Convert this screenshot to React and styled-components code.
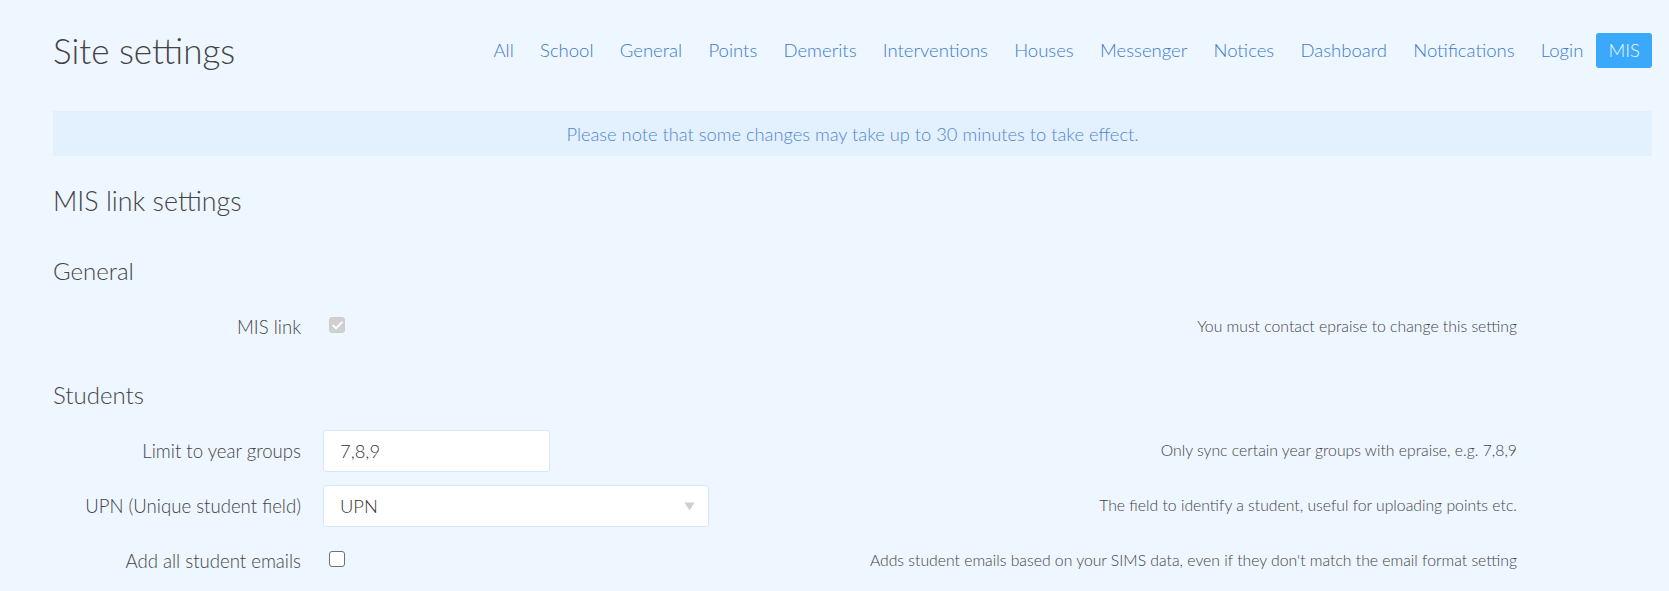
import React from "react";
import styled, { createGlobalStyle } from "styled-components";

const GlobalStyle = createGlobalStyle`
  html, body {
    margin: 0;
    padding: 0;
    background: #eef6ff;
  }
  body {
    font-family: Lato, "Open Sans", sans-serif;
    color: #444;
  }
  * { box-sizing: border-box; }
`;

const Page = styled.div`
  min-height: 591px;
  padding: 28px 17px 0 53px;
  background: #eef6ff;
`;

const Header = styled.header`
  display: flex;
  align-items: center;
  justify-content: space-between;
  min-height: 44px;
`;

const Title = styled.h1`
  margin: 0;
  font-size: 35px;
  line-height: 44px;
  font-weight: 300;
  color: #444;
`;

const Nav = styled.nav`
  display: flex;
  align-items: center;
`;

const NavLink = styled.a`
  display: block;
  padding: 7px ${(p) => (p.$active ? "12px" : "13.15px")};
  font-size: 18.5px;
  line-height: 21px;
  font-weight: 300;
  border-radius: 3px;
  text-decoration: none;
  cursor: pointer;
  color: ${(p) => (p.$active ? "#eef7ff" : "#3b7bcb")};
  background: ${(p) => (p.$active ? "#3aa9fb" : "transparent")};
`;

const Alert = styled.div`
  margin-top: 39px;
  padding: 12px 15px 11px;
  background: #e3f0fd;
  color: #4f86d2;
  font-size: 18.3px;
  line-height: 22px;
  font-weight: 300;
  text-align: center;
`;

const SectionTitle = styled.h2`
  margin: 30px 0 0;
  font-size: 26.8px;
  line-height: 31px;
  font-weight: 300;
  color: #444;
`;

const GroupTitle = styled.h3`
  margin: ${(p) => (p.$first ? "40px" : "33px")} 0 20px;
  font-size: 24px;
  line-height: 1.2;
  font-weight: 300;
  color: #444;
`;

const Rows = styled.div`
  display: flex;
  flex-direction: column;
  gap: 13px;
`;

const Row = styled.div`
  display: flex;
  align-items: center;
  min-height: 42px;
`;

const Label = styled.label`
  width: 248px;
  flex: none;
  text-align: right;
  font-size: 18.6px;
  line-height: 22px;
  font-weight: 300;
  color: #444;
`;

const Control = styled.div`
  margin-left: 22px;
  display: flex;
  align-items: center;
`;

const Description = styled.div`
  margin-left: auto;
  padding-right: 135px;
  font-size: 15.75px;
  line-height: 1.2;
  font-weight: 300;
  color: #444;
  text-align: right;
`;

const TextInput = styled.input`
  width: ${(p) => p.$width}px;
  height: 42px;
  padding: 0 16px;
  background: #fff;
  border: 1px solid #d9e8f8;
  border-radius: 3px;
  font-family: Lato, sans-serif;
  font-size: 18.4px;
  font-weight: 300;
  color: #333;
  outline: none;
`;

const SelectBox = styled.div`
  position: relative;
  width: ${(p) => p.$width}px;
  height: 42px;
  display: flex;
  align-items: center;
  padding: 0 16px;
  background: #fff;
  border: 1px solid #d9e8f8;
  border-radius: 3px;
  font-size: 18.4px;
  font-weight: 300;
  color: #333;
`;

const Caret = styled.svg`
  position: absolute;
  right: 13px;
  top: 16px;
`;

const Check = styled.span`
  display: inline-flex;
  align-items: center;
  justify-content: center;
  width: 16px;
  height: 16px;
  margin: 0 0 3px 6px;
  border-radius: 3px;
  background: ${(p) => (p.$checked ? "#d0d0d0" : "#fff")};
  border: ${(p) => (p.$checked ? "1px solid #cdcdcd" : "1.5px solid #707070")};
`;

function Checkbox({ checked }) {
  return (
    <Check $checked={checked} role="checkbox" aria-checked={checked}>
      {checked && (
        <svg width="11" height="9" viewBox="0 0 11 9">
          <path d="M1.2 4.6 L4 7.4 L9.8 1.4" fill="none" stroke="#fff" strokeWidth="1.9" strokeLinecap="round" strokeLinejoin="round" />
        </svg>
      )}
    </Check>
  );
}

const navItems = [
  "All",
  "School",
  "General",
  "Points",
  "Demerits",
  "Interventions",
  "Houses",
  "Messenger",
  "Notices",
  "Dashboard",
  "Notifications",
  "Login",
  "MIS",
];

export default function App() {
  return (
    <>
      <GlobalStyle />
      <Page>
        <Header>
          <Title>Site settings</Title>
          <Nav>
            {navItems.map((n) => (
              <NavLink key={n} $active={n === "MIS"}>
                {n}
              </NavLink>
            ))}
          </Nav>
        </Header>

        <Alert>Please note that some changes may take up to 30 minutes to take effect.</Alert>

        <SectionTitle>MIS link settings</SectionTitle>

        <GroupTitle $first>General</GroupTitle>
        <Rows>
          <Row>
            <Label>MIS link</Label>
            <Control>
              <Checkbox checked />
            </Control>
            <Description>You must contact epraise to change this setting</Description>
          </Row>
        </Rows>

        <GroupTitle>Students</GroupTitle>
        <Rows>
          <Row>
            <Label>Limit to year groups</Label>
            <Control>
              <TextInput $width={227} defaultValue="7,8,9" />
            </Control>
            <Description>Only sync certain year groups with epraise, e.g. 7,8,9</Description>
          </Row>
          <Row>
            <Label>UPN (Unique student field)</Label>
            <Control>
              <SelectBox $width={386}>
                UPN
                <Caret width="11" height="9" viewBox="0 0 11 9">
                  <path d="M0.5 0.5 H10.5 L5.5 8.5 Z" fill="#cfcfcf" />
                </Caret>
              </SelectBox>
            </Control>
            <Description>The field to identify a student, useful for uploading points etc.</Description>
          </Row>
          <Row>
            <Label>Add all student emails</Label>
            <Control>
              <Checkbox />
            </Control>
            <Description>
              Adds student emails based on your SIMS data, even if they don't match the email format setting
            </Description>
          </Row>
        </Rows>
      </Page>
    </>
  );
}
